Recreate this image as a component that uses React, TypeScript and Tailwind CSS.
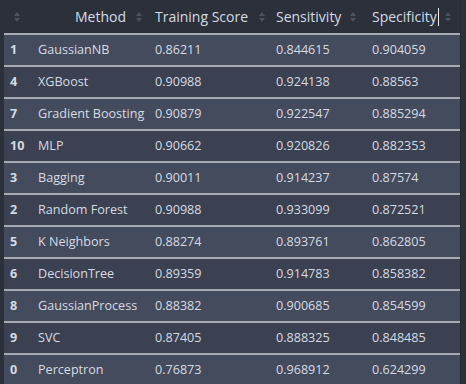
import React from "react";

const rows = [
  ["1", "GaussianNB", "0.86211", "0.844615", "0.904059"],
  ["4", "XGBoost", "0.90988", "0.924138", "0.88563"],
  ["7", "Gradient Boosting", "0.90879", "0.922547", "0.885294"],
  ["10", "MLP", "0.90662", "0.920826", "0.882353"],
  ["3", "Bagging", "0.90011", "0.914237", "0.87574"],
  ["2", "Random Forest", "0.90988", "0.933099", "0.872521"],
  ["5", "K Neighbors", "0.88274", "0.893761", "0.862805"],
  ["6", "DecisionTree", "0.89359", "0.914783", "0.858382"],
  ["8", "GaussianProcess", "0.88382", "0.900685", "0.854599"],
  ["9", "SVC", "0.87405", "0.888325", "0.848485"],
  ["0", "Perceptron", "0.76873", "0.968912", "0.624299"],
];

const SortIcon = () => (
  <svg width="8" height="12" viewBox="0 0 8 12" className="shrink-0">
    <path d="M4 1 L7 5 H1 Z" fill="#4b5262" />
    <path d="M4 11 L7 7 H1 Z" fill="#4b5262" />
  </svg>
);

export default function App() {
  return (
    <div
      className="w-[466px] h-[384px] bg-[#2b303b] overflow-hidden text-[#d6dbe3]"
      style={{ fontFamily: '"Open Sans", "Noto Sans", sans-serif' }}
    >
      <div className="ml-[4px] w-[457px] border-r border-[#252a33]">
        {/* header */}
        <div className="flex h-[35px] items-center text-[14px] border-b-2 border-[#a7abb2]">
          <div className="w-[26px] flex justify-center">
            <SortIcon />
          </div>
          <div className="w-[117px] flex items-center justify-end gap-[9px] pr-[4px]">
            <span>Method</span>
            <SortIcon />
          </div>
          <div className="w-[121px] flex items-center gap-[10px] pl-[8px]">
            <span>Training Score</span>
            <SortIcon />
          </div>
          <div className="w-[96px] flex items-center gap-[8px] pl-[8px]">
            <span>Sensitivity</span>
            <SortIcon />
          </div>
          <div className="flex-1 flex items-center pl-[8px]">
            <span>Specificity</span>
            <span className="w-px h-[18px] bg-[#e5e8ee] ml-[1px]" />
            <span className="ml-[5px]">
              <SortIcon />
            </span>
          </div>
        </div>
        {rows.map((r, i) => (
          <div
            key={r[0]}
            className={
              "flex h-[32px] items-center text-[12.6px] border-b-2 border-[#a7abb2] " +
              (i % 2 === 0 ? "bg-[#444b5c]" : "bg-[#3b4151]")
            }
          >
            <div className="w-[26px] pl-[6px] font-bold">{r[0]}</div>
            <div className="w-[117px] pl-[8px] whitespace-nowrap">{r[1]}</div>
            <div className="w-[121px] pl-[8px]">{r[2]}</div>
            <div className="w-[96px] pl-[8px]">{r[3]}</div>
            <div className="flex-1 pl-[8px]">{r[4]}</div>
          </div>
        ))}
      </div>
    </div>
  );
}
